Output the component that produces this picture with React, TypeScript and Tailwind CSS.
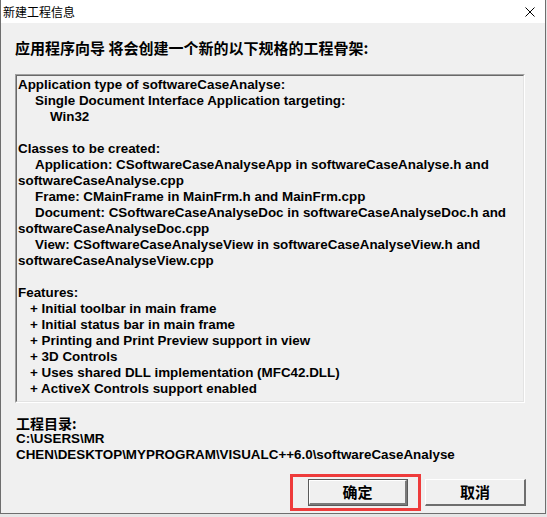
import React from "react";

const latin = { fontFamily: '"Liberation Sans", Arial, sans-serif' };
const cjk = { fontFamily: '"Noto Sans CJK SC", "Liberation Sans", sans-serif' };

type Line = { t: string; ind: number };
const lines: Line[] = [
  { t: "Application type of softwareCaseAnalyse:", ind: 0 },
  { t: "Single Document Interface Application targeting:", ind: 17 },
  { t: "Win32", ind: 32 },
  { t: "", ind: 0 },
  { t: "Classes to be created:", ind: 0 },
  { t: "Application: CSoftwareCaseAnalyseApp in softwareCaseAnalyse.h and", ind: 17 },
  { t: "softwareCaseAnalyse.cpp", ind: 0 },
  { t: "Frame: CMainFrame in MainFrm.h and MainFrm.cpp", ind: 17 },
  { t: "Document: CSoftwareCaseAnalyseDoc in softwareCaseAnalyseDoc.h and", ind: 17 },
  { t: "softwareCaseAnalyseDoc.cpp", ind: 0 },
  { t: "View: CSoftwareCaseAnalyseView in softwareCaseAnalyseView.h and", ind: 17 },
  { t: "softwareCaseAnalyseView.cpp", ind: 0 },
  { t: "", ind: 0 },
  { t: "Features:", ind: 0 },
  { t: "+ Initial toolbar in main frame", ind: 12 },
  { t: "+ Initial status bar in main frame", ind: 12 },
  { t: "+ Printing and Print Preview support in view", ind: 12 },
  { t: "+ 3D Controls", ind: 12 },
  { t: "+ Uses shared DLL implementation (MFC42.DLL)", ind: 12 },
  { t: "+ ActiveX Controls support enabled", ind: 12 },
];

export default function App() {
  return (
    <div className="w-[547px] h-[517px] bg-[#e6e6e6] overflow-hidden">
      <div className="w-[546px] h-[514px] flex flex-col border-l border-r border-b border-[#6e6e6e] bg-[#f0f0f0]">
        {/* title bar */}
        <div className="h-[23px] bg-white flex items-center justify-between pl-[2px] pr-[10px] shrink-0">
          <span className="text-[12px] leading-[14px] text-black" style={cjk}>
            新建工程信息
          </span>
          <svg width="10" height="10" viewBox="0 0 10 10">
            <path d="M0.5 0.5 L9.5 9.5 M9.5 0.5 L0.5 9.5" stroke="#000" strokeWidth="1" fill="none" />
          </svg>
        </div>

        {/* body */}
        <div className="flex flex-col flex-1 pt-[17px] pb-[6px]">
          <div
            className="pl-[14px] h-[16px] leading-[16px] text-[15px] font-bold text-black whitespace-nowrap"
            style={cjk}
          >
            应用程序向导 将会创建一个新的以下规格的工程骨架:
          </div>

          <div className="mt-[18px] ml-[14px] w-[510px] h-[329px] border-t border-l border-[#a0a0a0] border-r border-b border-r-white border-b-white">
            <div className="w-full h-full border-t border-l border-[#696969] border-r border-b border-r-[#e3e3e3] border-b-[#e3e3e3] pt-[1px] pl-[1px]">
              {lines.map((l, i) => (
                <div
                  key={i}
                  className="h-[16px] leading-[16px] text-[13.4px] font-bold text-black whitespace-nowrap"
                  style={{ ...latin, paddingLeft: l.ind }}
                >
                  {l.t}
                </div>
              ))}
            </div>
          </div>

          <div className="mt-[12px] pl-[15px] flex flex-col">
            <div className="h-[16px] leading-[16px] text-[14px] font-bold text-black" style={cjk}>
              工程目录:
            </div>
            <div className="h-[16px] leading-[16px] text-[13.4px] font-bold text-black whitespace-nowrap" style={latin}>
              C:\USERS\MR
            </div>
            <div className="h-[16px] leading-[16px] text-[13.4px] font-bold text-black whitespace-nowrap" style={latin}>
              CHEN\DESKTOP\MYPROGRAM\VISUALC++6.0\softwareCaseAnalyse
            </div>
          </div>

          <div className="mt-[16px] flex justify-end gap-[17px] pr-[19px]">
            <div className="relative">
              <button
                className="w-[100px] h-[27px] border border-[#5a5a5a] bg-[#f0f0f0] p-0 flex"
                style={cjk}
              >
                <span className="flex-1 flex items-center justify-center border-t border-l border-white border-r-2 border-b-2 border-r-[#7a7a7a] border-b-[#7a7a7a] text-[15px] font-bold text-black">
                  确定
                </span>
              </button>
              <div className="absolute left-[-18px] top-[-5px] w-[131px] h-[37px] border-[3px] border-[#ee3b3b] pointer-events-none" />
            </div>
            <button
              className="w-[101px] h-[27px] border-t border-l border-white border-r-2 border-b-2 border-r-[#6e6e6e] border-b-[#6e6e6e] bg-[#f0f0f0] flex items-center justify-center text-[15px] font-bold text-black"
              style={cjk}
            >
              取消
            </button>
          </div>
        </div>
      </div>
    </div>
  );
}
